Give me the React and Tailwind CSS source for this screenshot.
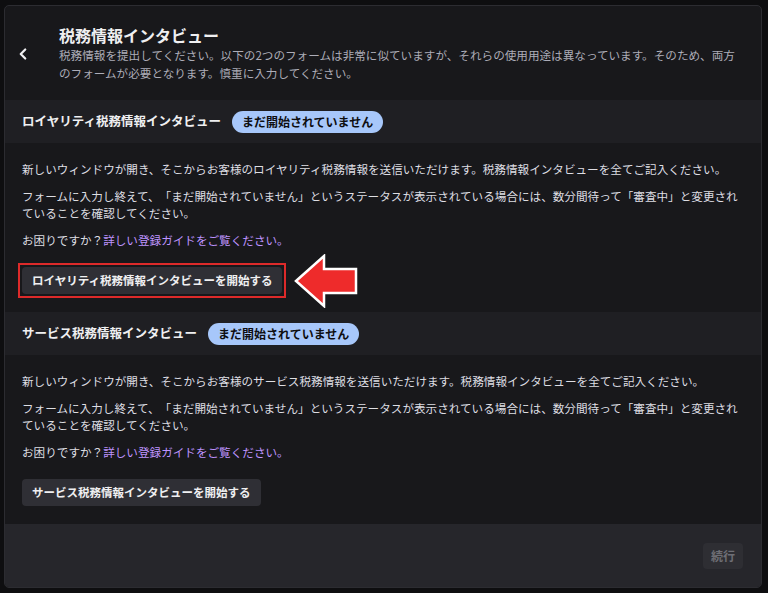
import { ChevronLeft } from "lucide-react";

const font = { fontFamily: '"Noto Sans CJK JP", "Noto Sans", sans-serif' };

function Badge() {
  return (
    <span className="inline-flex items-center h-[22px] px-[10px] rounded-full bg-[#a7c7fa] text-[#0e0e10] text-[12px] font-bold leading-none">
      まだ開始されていません
    </span>
  );
}

function Arrow() {
  return (
    <svg width="66" height="54" viewBox="0 0 66 54" className="absolute left-full top-1/2 -translate-y-1/2 ml-[11px]">
      <polygon
        points="3,27 31,2 31,15 63,15 63,39 31,39 31,52"
        fill="#ee2b2b"
        stroke="#ffffff"
        strokeWidth="2.5"
        strokeLinejoin="miter"
      />
    </svg>
  );
}

function Section({ title, kind, highlight }) {
  return (
    <div>
      <div className="h-[43px] bg-[#1f1f23] px-[17px] flex items-center gap-[11px]">
        <span className="text-[12.5px] font-semibold text-[#efeff1]">{title}</span>
        <Badge />
      </div>
      <div className="px-[17px] pt-[18px] pb-[18px] text-[11.6px] leading-[17px] text-[#dedee3]">
        <p>
          新しいウィンドウが開き、そこからお客様の{kind}税務情報を送信いただけます。税務情報インタビューを全てご記入ください。
        </p>
        <p className="mt-[10px]">
          フォームに入力し終えて、「まだ開始されていません」というステータスが表示されている場合には、数分間待って「審査中」と変更されていることを確認してください。
        </p>
        <p className="mt-[10px]">
          お困りですか？<a href="#" className="text-[#bf94ff]">詳しい登録ガイドをご覧ください。</a>
        </p>
        <div className="mt-[18px] flex">
          <div className="relative">
            <button className="h-[27px] px-[10px] rounded-[4px] bg-[#2f2f35] text-[#efeff1] text-[11.5px] font-bold">
              {kind}税務情報インタビューを開始する
            </button>
            {highlight && (
              <>
                <div className="absolute -inset-[4px] border-[2.5px] border-[#dd2a2a] pointer-events-none" />
                <Arrow />
              </>
            )}
          </div>
        </div>
      </div>
    </div>
  );
}

export default function App() {
  return (
    <div className="min-h-screen bg-[#0e0e10] pt-[5px] pl-[4px] [text-spacing-trim:space-all]" style={font}>
      <div className="w-[758px] rounded-[5px] border border-[#2c2c31] bg-[#18181b] overflow-hidden">
        <div className="flex items-center pl-[9px] pr-[17px] pt-[19px] pb-[18px]">
          <ChevronLeft size={18} strokeWidth={3} className="text-[#efeff1] shrink-0" />
          <div className="ml-[27px]">
            <h1 className="text-[16px] leading-[20px] font-bold text-[#efeff1]">税務情報インタビュー</h1>
            <p className="mt-px text-[11.6px] leading-[18px] text-[#adadb8]">
              税務情報を提出してください。以下の2つのフォームは非常に似ていますが、それらの使用用途は異なっています。そのため、両方のフォームが必要となります。慎重に入力してください。
            </p>
          </div>
        </div>
        <Section title="ロイヤリティ税務情報インタビュー" kind="ロイヤリティ" highlight />
        <Section title="サービス税務情報インタビュー" kind="サービス" />
        <div className="h-[63px] bg-[#26262b] flex items-center justify-end pr-[18px]">
          <button className="h-[26px] px-[8px] rounded-[4px] bg-[#2e2e33] text-[#6e6e75] text-[12px] font-bold">
            続行
          </button>
        </div>
      </div>
    </div>
  );
}
